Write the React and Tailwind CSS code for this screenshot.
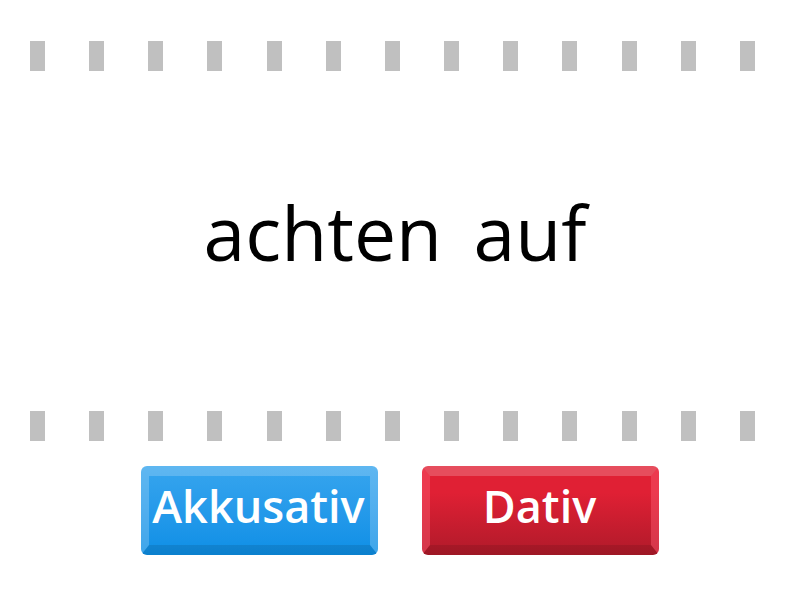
const MARKS = Array.from({ length: 13 }, (_, i) => i);

function MarkRow() {
  return (
    <div className="flex h-[30px] justify-between pr-[45px] pl-[30px]" aria-hidden="true">
      {MARKS.map((i) => (
        <span key={i} className="w-[15px] bg-[#c0c0c0]" />
      ))}
    </div>
  );
}

const TONES = {
  blue: "bg-linear-to-b from-[#36a5ee] to-[#0c8fe6] border-x-white/20",
  red: "bg-linear-to-b from-[#e02034] from-30% to-[#b01a2a] border-x-[#f8546a]/50",
};

function AnswerButton({ tone, children }) {
  return (
    <button
      type="button"
      className={`flex h-[89px] w-[237px] items-center justify-center rounded-md border-x-8 border-y-10 border-t-white/20 border-b-black/10 bg-origin-border pr-0.5 pb-2.5 text-[45px] leading-[60px] font-semibold text-white ${TONES[tone]}`}
    >
      {children}
    </button>
  );
}

export default function App() {
  return (
    <main className="min-h-screen bg-white pt-[41px] font-['Open_Sans','Noto_Sans',sans-serif]">
      <MarkRow />
      <div className="flex h-[340px] items-center justify-center pr-2.5 pb-[18px]">
        <h1 className="text-[75px] leading-[104px] font-normal text-black">
          achten <span className="ml-3">auf</span>
        </h1>
      </div>
      <MarkRow />
      <div className="mt-[25px] flex flex-wrap justify-center gap-11">
        <AnswerButton tone="blue">Akkusativ</AnswerButton>
        <AnswerButton tone="red">Dativ</AnswerButton>
      </div>
    </main>
  );
}
